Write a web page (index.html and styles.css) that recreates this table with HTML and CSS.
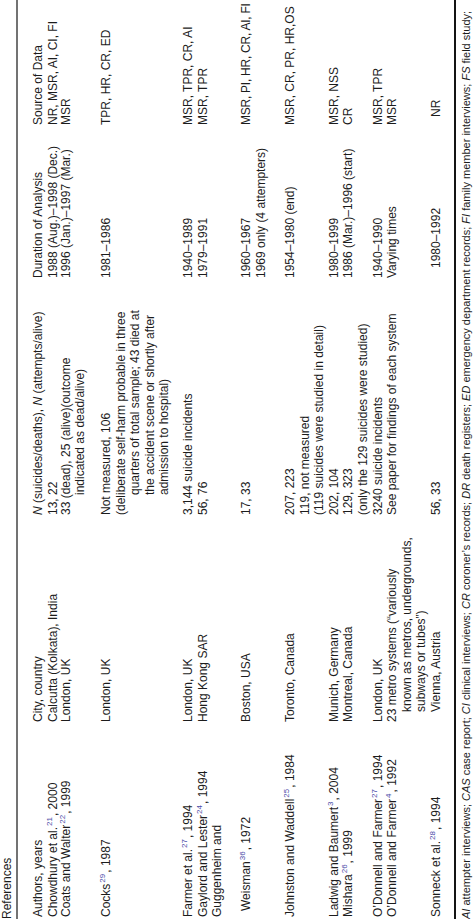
FILE: index.html
```html
<!DOCTYPE html>
<html lang="en">
<head>
<meta charset="utf-8">
<title>References table</title>
<link rel="stylesheet" href="styles.css">
</head>
<body>
<div class="page">
  <div class="sheet">
    <div class="title">References</div>
    <div class="rule-top"></div>
    <div class="table">
      <div class="row">
        <div class="cell">Authors, years</div>
        <div class="cell">City, country</div>
        <div class="cell"><i>N</i> (suicides/deaths), <i>N</i> (attempts/alive)</div>
        <div class="cell">Duration of Analysis</div>
        <div class="cell">Source of Data</div>
      </div>
      <div class="row">
        <div class="cell">Chowdhury et al.<sup>21</sup>, 2000</div>
        <div class="cell">Calcutta (Kolkata), India</div>
        <div class="cell">13, 22</div>
        <div class="cell">1988 (Aug.)–1998 (Dec.)</div>
        <div class="cell">NR, MSR, AI, CI, FI</div>
      </div>
      <div class="row tight">
        <div class="cell">Coats and Walter<sup>22</sup>, 1999</div>
        <div class="cell">London, UK</div>
        <div class="cell">
          <div>33 (dead), 25 (alive)(outcome</div>
          <div class="i20">indicated as dead/alive)</div>
        </div>
        <div class="cell">1996 (Jan.)–1997 (Mar.)</div>
        <div class="cell">MSR</div>
      </div>
      <div class="row gap-11">
        <div class="cell">Cocks<sup>29</sup>, 1987</div>
        <div class="cell">London, UK</div>
        <div class="cell">
          <div>Not measured, 106</div>
          <div>(deliberate self-harm probable in three</div>
          <div class="i20">quarters of total sample; 43 died at</div>
          <div class="i20">the accident scene or shortly after</div>
          <div class="i20">admission to hospital)</div>
        </div>
        <div class="cell">1981–1986</div>
        <div class="cell">TPR, HR, CR, ED</div>
      </div>
      <div class="row gap-9">
        <div class="cell">Farmer et al.<sup>27</sup>, 1994</div>
        <div class="cell">London, UK</div>
        <div class="cell">3,144 suicide incidents</div>
        <div class="cell">1940–1989</div>
        <div class="cell">MSR, TPR, CR, AI</div>
      </div>
      <div class="row">
        <div class="cell">Gaylord and Lester<sup>24</sup>, 1994</div>
        <div class="cell">Hong Kong SAR</div>
        <div class="cell">56, 76</div>
        <div class="cell">1979–1991</div>
        <div class="cell">MSR, TPR</div>
      </div>
      <div class="row">
        <div class="cell">
          <div>Guggenheim and</div>
          <div class="i6 skip">Weisman<sup>36</sup>, 1972</div>
        </div>
        <div class="cell pad2">Boston, USA</div>
        <div class="cell pad2">17, 33</div>
        <div class="cell pad2">
          <div>1960–1967</div>
          <div>1969 only (4 attempters)</div>
        </div>
        <div class="cell pad2 snug">MSR, PI, HR, CR, AI, FI</div>
      </div>
      <div class="row gap-line">
        <div class="cell">Johnston and Waddell<sup>25</sup>, 1984</div>
        <div class="cell">Toronto, Canada</div>
        <div class="cell">
          <div>207, 223</div>
          <div>119, not measured</div>
          <div>(119 suicides were studied in detail)</div>
        </div>
        <div class="cell">1954–1980 (end)</div>
        <div class="cell">MSR, CR, PR, HR,OS</div>
      </div>
      <div class="row">
        <div class="cell">Ladwig and Baumert<sup>3</sup>, 2004</div>
        <div class="cell">Munich, Germany</div>
        <div class="cell">202, 104</div>
        <div class="cell">1980–1999</div>
        <div class="cell">MSR, NSS</div>
      </div>
      <div class="row">
        <div class="cell">Mishara<sup>26</sup>, 1999</div>
        <div class="cell">Montreal, Canada</div>
        <div class="cell">
          <div>129, 323</div>
          <div>(only the 129 suicides were studied)</div>
        </div>
        <div class="cell">1986 (Mar.)–1996 (start)</div>
        <div class="cell">CR</div>
      </div>
      <div class="row">
        <div class="cell">O’Donnell and Farmer<sup>27</sup>, 1994</div>
        <div class="cell">London, UK</div>
        <div class="cell">3240 suicide incidents</div>
        <div class="cell">1940–1990</div>
        <div class="cell">MSR, TPR</div>
      </div>
      <div class="row">
        <div class="cell">O’Donnell and Farmer<sup>4</sup>, 1992</div>
        <div class="cell">
          <div>23 metro systems (“variously</div>
          <div class="i10">known as metros, undergrounds,</div>
          <div class="i10">subways or tubes”)</div>
        </div>
        <div class="cell">See paper for findings of each system</div>
        <div class="cell">Varying times</div>
        <div class="cell">MSR</div>
      </div>
      <div class="row">
        <div class="cell">Sonneck et al.<sup>28</sup>, 1994</div>
        <div class="cell i10">Vienna, Austria</div>
        <div class="cell">56, 33</div>
        <div class="cell i10">1980–1992</div>
        <div class="cell i8">NR</div>
      </div>
    </div>
    <div class="rule-bottom"></div>
    <div class="foot"><i>AI</i> attempter interviews; <i>CAS</i> case report; <i>CI</i> clinical interviews; <i>CR</i> coroner’s records; <i>DR</i> death registers; <i>ED</i> emergency department records; <i>FI</i> family member interviews; <i>FS</i> field study;</div>
  </div>
</div>
</body>
</html>
```

FILE: styles.css
```css
* {
  box-sizing: border-box;
}

html,
body {
  margin: 0;
  padding: 0;
  background: #ffffff;
}

.page {
  width: 474px;
  height: 919px;
  overflow: hidden;
}

/* the table is printed sideways: laid out 919 wide, turned a quarter left */
.sheet {
  width: 919px;
  height: 474px;
  transform-origin: 0 0;
  transform: translateY(919px) rotate(-90deg);
  display: flex;
  flex-direction: column;
  font-family: "Liberation Sans", Arial, sans-serif;
  font-size: 12px;
  line-height: 14.6px;
  color: #1c1c1c;
}

.title {
  white-space: nowrap;
}

.rule-top {
  margin-top: 1.5px;
  height: 2px;
  background: #737373;
}

.table {
  margin-top: 13px;
  padding-left: 2px;
  display: flex;
  flex-direction: column;
}

.row {
  display: grid;
  grid-template-columns: 195px 207px 237px 153px 1fr;
  white-space: nowrap;
}

.tight {
  margin-top: -1.5px;
}

.gap-11 {
  margin-top: 11px;
}

.gap-9 {
  margin-top: 9px;
}

.gap-line {
  margin-top: 14.6px;
}

.pad2 {
  padding-top: 29.2px;
}

.skip {
  margin-top: 14.6px;
}

.snug {
  letter-spacing: -0.25px;
}

.i6 {
  padding-left: 6px;
}

.i8 {
  padding-left: 8px;
}

.i10 {
  padding-left: 10px;
}

.i20 {
  padding-left: 20px;
}

sup {
  font-size: 8px;
  line-height: 0;
  vertical-align: 5px;
  color: #4a4aa8;
  margin-left: 1px;
  margin-right: 1px;
}

.rule-bottom {
  margin-top: 10px;
  height: 2px;
  background: #141414;
}

.foot {
  margin-top: 4.5px;
  font-size: 11px;
  line-height: 13px;
  white-space: nowrap;
}
```
